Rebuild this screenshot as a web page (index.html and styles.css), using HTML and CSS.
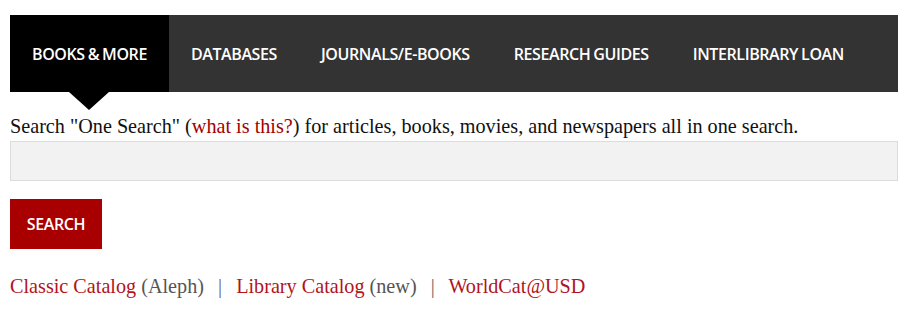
FILE: index.html
```html
<!DOCTYPE html>
<html lang="en">
<head>
<meta charset="utf-8">
<title>One Search</title>
<link rel="stylesheet" href="styles.css">
</head>
<body>
<div class="page">
  <nav class="tabs">
    <a class="tab active" href="#">BOOKS &amp; MORE</a>
    <a class="tab" href="#">DATABASES</a>
    <a class="tab" href="#">JOURNALS/E-BOOKS</a>
    <a class="tab" href="#">RESEARCH GUIDES</a>
    <a class="tab" href="#">INTERLIBRARY LOAN</a>
  </nav>
  <p class="intro">Search "One Search" (<a class="what" href="#">what is this?</a>) for articles, books, movies, and newspapers all in one search.</p>
  <input class="search-input" type="text" aria-label="Search">
  <button class="search-btn" type="button">SEARCH</button>
  <p class="links">
    <a href="#">Classic Catalog</a> (Aleph) <span class="sep">|</span> <a href="#">Library Catalog</a> (new) <span class="sep">|</span> <a href="#">WorldCat@USD</a>
  </p>
</div>
</body>
</html>
```

FILE: styles.css
```css
html, body {
  margin: 0;
  padding: 0;
  background: #fff;
}

.page {
  width: 888px;
  margin: 15px 0 0 10px;
  display: flex;
  flex-direction: column;
  align-items: flex-start;
  font-family: "Liberation Serif", "Times New Roman", serif;
}

.tabs {
  display: flex;
  width: 100%;
  height: 77px;
  background: #333333;
}

.tab {
  display: flex;
  align-items: center;
  padding: 0 22px;
  color: #fff;
  text-decoration: none;
  font-family: "Open Sans", "Liberation Sans", sans-serif;
  font-weight: 600;
  font-size: 16px;
  letter-spacing: -0.4px;
  word-spacing: -0.8px;
  position: relative;
}

.tab.active {
  background: #000;
}

.tab.active::after {
  content: "";
  position: absolute;
  left: 50%;
  top: 100%;
  margin-left: -20px;
  border-left: 20px solid transparent;
  border-right: 20px solid transparent;
  border-top: 18px solid #000;
}

.intro {
  margin: 22px 0 0;
  font-size: 20.2px;
  line-height: 24px;
  color: #111;
}

.what {
  color: #a30000;
  text-decoration: none;
}

.search-input {
  box-sizing: border-box;
  width: 100%;
  height: 40px;
  margin: 3px 0 0;
  border: 1px solid #dcdcdc;
  background: #f2f2f2;
  padding: 0 8px;
  font-size: 16px;
}

.search-btn {
  margin-top: 18px;
  width: 92px;
  height: 50px;
  border: 0;
  background: #a80000;
  color: #fff;
  font-family: "Open Sans", "Liberation Sans", sans-serif;
  font-weight: 600;
  font-size: 16px;
  letter-spacing: -0.4px;
  padding: 0;
}

.links {
  margin: 25px 0 0;
  font-size: 20.2px;
  line-height: 24px;
  color: #555;
}

.links a {
  color: #b3131b;
  text-decoration: none;
}

.sep {
  margin: 0 9px;
  color: #666;
}
```
